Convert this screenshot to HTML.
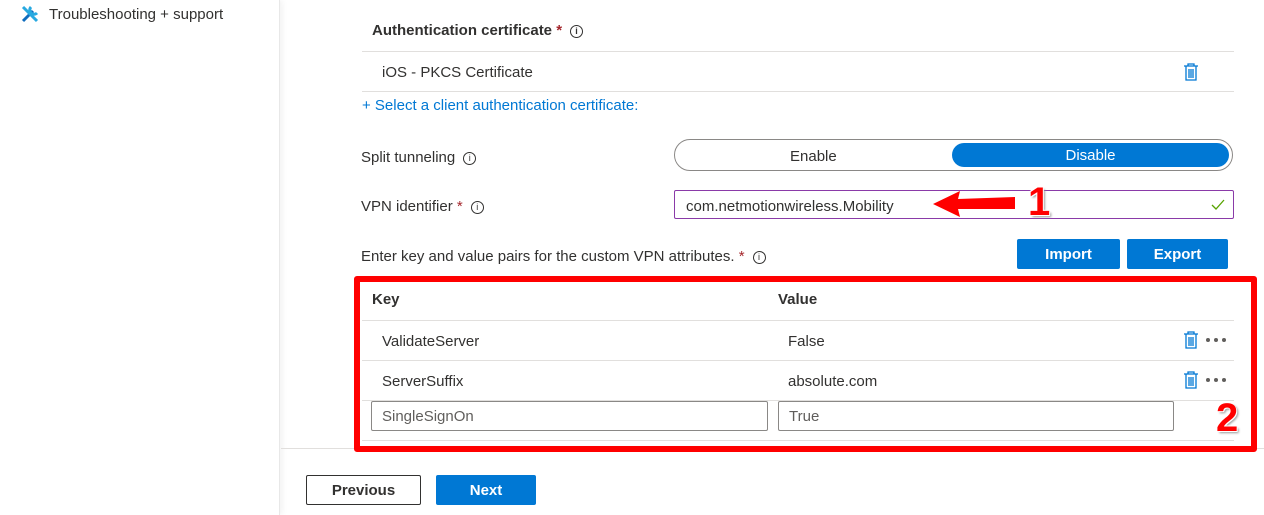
<!DOCTYPE html>
<html><head><style>
*{margin:0;padding:0;box-sizing:border-box}
body{width:1264px;height:515px;position:relative;overflow:hidden;background:#fff;font-family:"Liberation Sans",sans-serif;font-size:14px;color:#323130}
.a{position:absolute;white-space:nowrap}
.line{position:absolute;height:1px;background:#e1dfdd}
.info{display:inline-block;width:13px;height:13px;border:1px solid #323130;border-radius:50%;font-size:9px;text-align:center;line-height:11px;vertical-align:1px;margin-left:8px}
.req{color:#a4262c}
.btn{position:absolute;background:#0078d4;color:#fff;font-weight:bold;font-size:15px;text-align:center;border-radius:2px;padding-top:2px}
.inp{position:absolute;border:1px solid #8a8886;border-radius:2px;padding-left:10px;color:#605e5c;font-size:15px}
.dots{position:absolute;width:22px;height:4px}
.dots i{position:absolute;top:0;width:4px;height:4px;border-radius:50%;background:#605e5c}
</style></head><body>
<div class="a" style="left:0;top:0;width:280px;height:515px;border-right:1px solid #e8e8e8;box-shadow:2px 0 6px rgba(0,0,0,.06)"></div>
<svg class="a" style="left:20px;top:4px" width="20" height="20" viewBox="0 0 20 20"><path d="M3 17 L13 7" stroke="#0f6cbd" stroke-width="3"/><path d="M11 3 a4 4 0 0 0 6 6" stroke="#28a9e0" stroke-width="3" fill="none"/><path d="M3 3 L17 17" stroke="#28a9e0" stroke-width="3"/></svg>
<div class="a" style="left:49px;top:6px;font-size:15px">Troubleshooting + support</div>

<div class="a" style="left:372px;top:22px;font-weight:bold;font-size:15px">Authentication certificate <span class="req">*</span><span class="info">i</span></div>
<div class="line" style="left:362px;top:51px;width:872px"></div>
<div class="a" style="left:382px;top:64px;font-size:15px">iOS - PKCS Certificate</div>
<svg class="a" style="left:1183px;top:62px" width="16" height="20" viewBox="0 0 16 20"><path d="M1 4h14M5 4V2h6v2M3 4v14h10V4M6 7v9M8 7v9M10 7v9" stroke="#0078d4" stroke-width="1.3" fill="none"/></svg>
<div class="line" style="left:362px;top:91px;width:872px"></div>
<div class="a" style="left:362px;top:97px;color:#0078d4;font-size:15px">+ Select a client authentication certificate:</div>

<div class="a" style="left:361px;top:149px;font-size:15px">Split tunneling<span class="info">i</span></div>
<div class="a" style="left:674px;top:139px;width:559px;height:32px;border:1px solid #8a8886;border-radius:16px"></div>
<div class="a" style="left:790px;top:148px;font-size:15px">Enable</div>
<div class="a" style="left:952px;top:143px;width:277px;height:24px;background:#0078d4;border-radius:12px;color:#fff;text-align:center;line-height:26px;font-size:15px">Disable</div>

<div class="a" style="left:361px;top:198px;font-size:15px">VPN identifier <span class="req">*</span><span class="info">i</span></div>
<div class="a" style="left:674px;top:190px;width:560px;height:29px;border:1px solid #8a3aa8;border-radius:2px"></div>
<div class="a" style="left:686px;top:198px;font-size:15px">com.netmotionwireless.Mobility</div>
<svg class="a" style="left:1210px;top:198px" width="16" height="14"><path d="M2 7l4 4 8-9" stroke="#57a300" stroke-width="1.3" fill="none"/></svg>
<svg class="a" style="left:930px;top:186px" width="90" height="36"><path d="M3 18 L30 5 L28 13 L85 11 L85 23 L28 23 L30 31 Z" fill="#f00"/></svg>
<div class="a" style="left:1028px;top:180px;font-size:40px;font-weight:bold;color:#f00;text-shadow:1px 1px 0 #fff,-1px -1px 0 #fff,2px 2px 2px #999">1</div>

<div class="a" style="left:361px;top:248px;font-size:15px">Enter key and value pairs for the custom VPN attributes. <span class="req">*</span><span class="info">i</span></div>
<div class="btn" style="left:1017px;top:239px;width:103px;height:30px;line-height:28px">Import</div>
<div class="btn" style="left:1127px;top:239px;width:101px;height:30px;line-height:28px">Export</div>

<div class="a" style="left:372px;top:291px;font-weight:bold;font-size:15px">Key</div>
<div class="a" style="left:778px;top:291px;font-weight:bold;font-size:15px">Value</div>
<div class="line" style="left:362px;top:320px;width:872px"></div>
<div class="a" style="left:382px;top:333px;font-size:15px">ValidateServer</div>
<div class="a" style="left:788px;top:333px;font-size:15px">False</div>
<div class="line" style="left:362px;top:360px;width:872px"></div>
<div class="a" style="left:382px;top:373px;font-size:15px">ServerSuffix</div>
<div class="a" style="left:788px;top:373px;font-size:15px">absolute.com</div>
<div class="line" style="left:362px;top:400px;width:872px"></div>
<svg class="a" style="left:1183px;top:330px" width="16" height="20" viewBox="0 0 16 20"><path d="M1 4h14M5 4V2h6v2M3 4v14h10V4M6 7v9M8 7v9M10 7v9" stroke="#0078d4" stroke-width="1.3" fill="none"/></svg>
<svg class="a" style="left:1183px;top:370px" width="16" height="20" viewBox="0 0 16 20"><path d="M1 4h14M5 4V2h6v2M3 4v14h10V4M6 7v9M8 7v9M10 7v9" stroke="#0078d4" stroke-width="1.3" fill="none"/></svg>
<div class="dots" style="left:1206px;top:338px"><i style="left:0"></i><i style="left:8px"></i><i style="left:16px"></i></div>
<div class="dots" style="left:1206px;top:378px"><i style="left:0"></i><i style="left:8px"></i><i style="left:16px"></i></div>
<div class="inp" style="left:371px;top:401px;width:397px;height:30px;line-height:29px">SingleSignOn</div>
<div class="inp" style="left:778px;top:401px;width:396px;height:30px;line-height:29px">True</div>
<div class="line" style="left:362px;top:440px;width:872px"></div>
<div class="line" style="left:281px;top:448px;width:983px;background:#e1dfdd"></div>
<div class="a" style="left:354px;top:276px;width:903px;height:176px;border:6px solid #f00;border-radius:3px"></div>
<div class="a" style="left:1216px;top:396px;font-size:40px;font-weight:bold;color:#f00;text-shadow:1px 1px 0 #fff,-1px -1px 0 #fff,2px 2px 2px #999">2</div>

<div class="a" style="left:306px;top:475px;width:115px;height:30px;border:1px solid #323130;border-radius:2px;text-align:center;line-height:29px;font-weight:bold;font-size:15px">Previous</div>
<div class="btn" style="left:436px;top:475px;width:100px;height:30px;line-height:28px">Next</div>
</body></html>
